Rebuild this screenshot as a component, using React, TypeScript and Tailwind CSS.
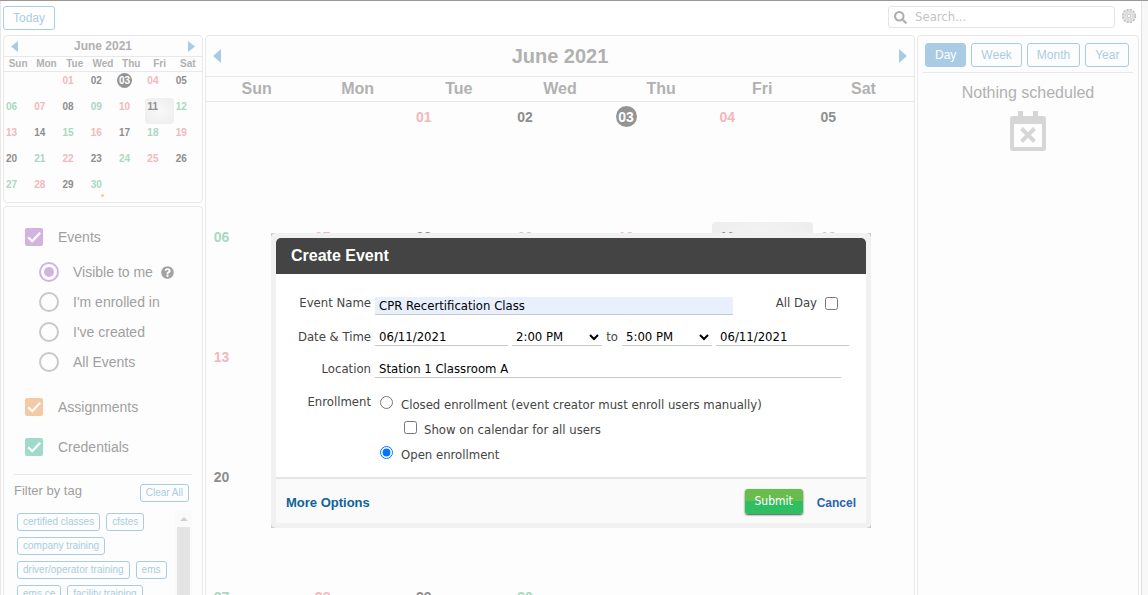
import { clsx } from 'clsx'
import { FaQuestionCircle, FaSearch } from 'react-icons/fa'

type Tone = 'red' | 'green' | 'black'

const weekdays = ['Sun', 'Mon', 'Tue', 'Wed', 'Thu', 'Fri', 'Sat']

// three shifts rotate through the month, one colour each
const rotation: Tone[] = ['red', 'black', 'green']

const toneClass = {
  red: 'text-[#f2b8bb]',
  green: 'text-[#a9d8c2]',
  black: 'text-[#8e8e8e]',
}

// the 4th and 5th repeat the 1st and 2nd, and so on
const toneOf = (day: number) => toneClass[rotation[(day - 1) % 3]]

const TODAY = 3
const SELECTED = 11
const FIRST_COLUMN = 2

const weeks = Array.from({ length: 5 }, (_, w) =>
  Array.from({ length: 7 }, (_, d) => {
    const day = w * 7 + d - FIRST_COLUMN + 1
    return day >= 1 && day <= 30 ? day : null
  })
)

const tags = [
  'certified classes',
  'cfstes',
  'company training',
  'driver/operator training',
  'ems',
  'ems ce',
  'facility training',
]

const times = ['1:00 PM', '2:00 PM', '3:00 PM', '4:00 PM', '5:00 PM']

const Arrow = ({ dir, small }: { dir: 'left' | 'right'; small?: boolean }) => (
  <svg
    viewBox="0 0 8 14"
    preserveAspectRatio="none"
    className={clsx('fill-[#a9cce4]', small ? 'h-[11px] w-[7px]' : 'h-[14px] w-2')}
  >
    <path d={dir === 'left' ? 'M8 0v14L0 7z' : 'M0 0v14l8-7z'} />
  </svg>
)

const Calendar = ({ small }: { small?: boolean }) => (
  <section className="rounded border border-[#e8e8e8] bg-[#fdfdfd] text-[#b1b1b1]">
    <div
      className={clsx(
        'flex items-center justify-between border-b border-[#e8e8e8] px-[7px]',
        small ? 'h-[21px]' : 'h-[41px]'
      )}
    >
      <button aria-label="Previous month">
        <Arrow dir="left" small={small} />
      </button>
      <h2 className={clsx('font-bold', small ? 'text-xs' : 'text-xl')}>June 2021</h2>
      <button aria-label="Next month">
        <Arrow dir="right" small={small} />
      </button>
    </div>
    <table className="w-full table-fixed border-separate border-spacing-0">
      <thead>
        <tr>
          {weekdays.map((name) => (
            <th
              key={name}
              className={clsx(
                'border-b border-[#e8e8e8] p-0 text-center font-bold',
                small ? 'h-[15px] text-[10px] leading-[14px]' : 'h-[25px] text-base leading-6'
              )}
            >
              {name}
            </th>
          ))}
        </tr>
      </thead>
      <tbody>
        {weeks.map((week, w) => (
          <tr key={w}>
            {week.map((day, d) => (
              <td
                key={d}
                className={clsx(
                  'p-0 align-top font-bold',
                  small ? 'h-[26px] text-[10px]' : 'h-[120px] text-sm',
                  day === SELECTED && 'rounded bg-radial from-[#f8f8f8] to-[#ededed]'
                )}
              >
                {day && (
                  <div className={small ? 'pt-px' : 'pt-1 pl-[5px]'}>
                    <span
                      className={clsx(
                        'flex items-center justify-center rounded-full',
                        small ? 'size-[15px]' : 'size-[21px]',
                        day === TODAY ? 'bg-[#949494] text-white' : toneOf(day)
                      )}
                    >
                      {String(day).padStart(2, '0')}
                    </span>
                    {day === 30 && <i className="mx-auto mt-0.5 block size-[3px] rounded-full bg-[#f4caa4]" />}
                  </div>
                )}
              </td>
            ))}
          </tr>
        ))}
      </tbody>
    </table>
  </section>
)

const CheckRow = ({ label, color }: { label: string; color: string }) => (
  <label className="flex h-10 items-center gap-[15px] pl-[21px] text-sm">
    <span className="grid place-items-center">
      <input
        type="checkbox"
        defaultChecked
        className={clsx('col-start-1 row-start-1 size-[18px] appearance-none rounded-xs', color)}
      />
      <svg viewBox="0 0 18 18" className="pointer-events-none col-start-1 row-start-1 size-[18px]">
        <path d="M3.2 9.2l4 4 8-8.4" fill="none" stroke="#fff" strokeWidth="2.2" />
      </svg>
    </span>
    {label}
  </label>
)

const RadioRow = ({ label, checked, help }: { label: string; checked?: boolean; help?: boolean }) => (
  <label className="flex h-[30px] items-center pl-[35px] text-sm">
    <input
      type="radio"
      name="visibility"
      defaultChecked={checked}
      className="mr-3.5 size-5 appearance-none rounded-full border-2 border-[#c8c8c8] p-[3px] checked:border-[#d2b3e0] checked:bg-[#d2b3e0] checked:bg-clip-content"
    />
    {label}
    {help && <FaQuestionCircle className="ml-2 size-[13px] text-[#a3a3a3]" />}
  </label>
)

const Filters = () => (
  <section className="flex min-h-0 flex-1 flex-col rounded-t border border-b-0 border-[#e8e8e8] bg-[#fdfdfd] text-[#a0a0a0]">
    <div className="pt-2.5">
      <CheckRow label="Events" color="bg-[#d2b3e0]" />
      <RadioRow label="Visible to me" checked help />
      <RadioRow label="I'm enrolled in" />
      <RadioRow label="I've created" />
      <RadioRow label="All Events" />
    </div>
    <div className="pt-2.5">
      <CheckRow label="Assignments" color="bg-[#f4caa4]" />
      <CheckRow label="Credentials" color="bg-[#a0dacb]" />
    </div>
    <div className="mx-2.5 mt-[7px] flex h-9 shrink-0 items-start justify-between border-t border-[#e8e8e8] pr-[3px]">
      <h3 className="pt-1.5 text-[13px]">Filter by tag</h3>
      <button className="mt-[9px] h-[18px] rounded-[3px] border border-[#a9cce4] px-[5px] text-[10px] leading-4 text-[#a9cce4]">
        Clear All
      </button>
    </div>
    <div className="mx-2.5 flex min-h-0 flex-1 overflow-hidden">
      <div className="flex flex-1 flex-wrap content-start gap-1.5 p-[3px] pr-0">
        {tags.map((tag) => (
          <button
            key={tag}
            className="h-[18px] rounded-[3px] border border-[#a9cce4] px-[5px] text-[10px] leading-4 text-[#a9cce4]"
          >
            {tag}
          </button>
        ))}
      </div>
      <div className="flex w-[17px] flex-col items-center bg-[#fafafa]">
        <svg viewBox="0 0 8 4" className="mt-[7px] mb-1.5 h-1 w-2 shrink-0 fill-[#d0d0d0]">
          <path d="M4 0l4 4H0z" />
        </svg>
        <div className="w-[13px] flex-1 bg-[#e4e4e4]" />
      </div>
    </div>
  </section>
)

const EmptyCalendar = () => (
  <svg viewBox="0 0 36 40" className="mx-auto mt-1.5 h-10 w-9">
    <path
      fill="#d6d6d6"
      fillRule="evenodd"
      d="M8 0h5v5h10V0h5v5h5a3 3 0 0 1 3 3v29a3 3 0 0 1-3 3H3a3 3 0 0 1-3-3V8a3 3 0 0 1 3-3h5zM4 13v23h28V13z"
    />
    <path d="M11.5 17.5l13 13M24.5 17.5l-13 13" stroke="#d6d6d6" strokeWidth="4" />
  </svg>
)

const Agenda = () => (
  <section className="w-[222px] rounded-t border border-b-0 border-[#e8e8e8] bg-[#fdfdfd] px-[5px] pt-[7px]">
    <div className="flex gap-[5px] border-b border-[#e8e8e8] px-0.5 pb-[5px]">
      {['Day', 'Week', 'Month', 'Year'].map((view) => (
        <button
          key={view}
          className={clsx(
            'h-6 rounded-[3px] border border-[#a9cce4] px-[9px] text-xs leading-[22px]',
            view === 'Day' ? 'bg-[#a9cce4] text-white' : 'text-[#a9cce4]'
          )}
        >
          {view}
        </button>
      ))}
    </div>
    <p className="pt-2 text-center text-base text-[#b1b1b1]">Nothing scheduled</p>
    <EmptyCalendar />
  </section>
)

const Gear = () => (
  <svg viewBox="0 0 16 16" className="size-4" fill="none">
    <circle cx="8" cy="8" r="4.6" stroke="#e2e2e2" strokeWidth="3.6" />
    <circle cx="8" cy="8" r="6.4" stroke="#c2c2c2" strokeWidth="1.6" strokeDasharray="2.2 1.15" />
    <circle cx="8" cy="8" r="3.6" stroke="#cfcfcf" strokeDasharray="1.6 1.2" />
    <circle cx="8" cy="8" r="1.9" stroke="#bdbdbd" />
  </svg>
)

const underline = 'h-[18px] border-b border-[#c8c8c8] text-[13px] leading-[17px] text-black outline-none'
const field = 'ml-1 px-1'
const label = 'w-[95px] shrink-0 text-right'

const CreateEvent = () => (
  <form
    role="dialog"
    aria-label="Create Event"
    className="w-[600px] bg-[#cfcfcf] font-['DejaVu_Sans_Condensed','DejaVu_Sans',sans-serif] text-[13px] leading-[18px] text-[#444]"
  >
    <div className="rounded-[5px] bg-[#f1f1f1] p-[5px]">
      <h1 className="h-9 rounded-t-[5px] bg-[#444] px-[15px] font-['Liberation_Sans',Arial,sans-serif] text-base leading-[35px] font-bold text-white">
        Create Event
      </h1>
      <div className="flex flex-col gap-[13px] bg-white pt-5 pb-[13px]">
        <div className="flex h-[21px] items-start">
          <label htmlFor="name" className={label}>
            Event Name
          </label>
          <input
            id="name"
            defaultValue="CPR Recertification Class"
            className={clsx(underline, field, 'w-[358px] self-end bg-[#e8f0fe]')}
          />
          <label className="ml-auto flex items-center gap-2 pr-7">
            All Day
            <input type="checkbox" className="size-[13px]" />
          </label>
        </div>
        <div className="flex items-center">
          <label htmlFor="start" className={label}>
            Date &amp; Time
          </label>
          <input id="start" defaultValue="06/11/2021" className={clsx(underline, field, 'w-[133px]')} />
          <select aria-label="Start time" defaultValue="2:00 PM" className={clsx(underline, 'ml-1 w-[90px]')}>
            {times.map((t) => (
              <option key={t}>{t}</option>
            ))}
          </select>
          <span className="w-5 text-center">to</span>
          <select aria-label="End time" defaultValue="5:00 PM" className={clsx(underline, 'w-[90px]')}>
            {times.map((t) => (
              <option key={t}>{t}</option>
            ))}
          </select>
          <input aria-label="End date" defaultValue="06/11/2021" className={clsx(underline, field, 'w-[133px]')} />
        </div>
        <div className="flex items-center pt-px">
          <label htmlFor="location" className={label}>
            Location
          </label>
          <input
            id="location"
            defaultValue="Station 1 Classroom A"
            className={clsx(underline, field, 'mr-[25px] flex-1')}
          />
        </div>
        <div role="radiogroup" aria-labelledby="enrollment" className="flex items-start pt-0.5">
          <span id="enrollment" className={label}>
            Enrollment
          </span>
          <div className="flex flex-col gap-[7px] pt-[3px] pl-[9px]">
            <label className="flex items-start gap-2">
              <input type="radio" name="enroll" className="size-[13px]" />
              Closed enrollment (event creator must enroll users manually)
            </label>
            <label className="flex items-start gap-[7px] pl-6">
              <input type="checkbox" className="size-[13px]" />
              Show on calendar for all users
            </label>
            <label className="flex items-start gap-2">
              <input type="radio" name="enroll" defaultChecked className="size-[13px]" />
              Open enrollment
            </label>
          </div>
        </div>
      </div>
      <div className="flex h-[46px] items-center border-t-2 border-[#e4e4e4] bg-[#fafafa] px-2.5 font-['Liberation_Sans',Arial,sans-serif]">
        <a href="#" className="pt-1 text-[13px] font-bold text-[#0d6499]">
          More Options
        </a>
        <button
          type="button"
          className="mr-3.5 ml-auto h-[25px] w-[58px] rounded-[3px] bg-linear-to-b from-[#69bd4c] from-50% to-[#2fbe61] to-50% font-['DejaVu_Sans_Condensed','DejaVu_Sans',sans-serif] text-xs text-white shadow-[0_1px_2px_rgba(0,0,0,0.7)]"
        >
          Submit
        </button>
        <a href="#" className="pt-1 text-xs leading-[18px] font-bold text-[#2b63ae]">
          Cancel
        </a>
      </div>
    </div>
  </form>
)

export default function App() {
  return (
    <div className="relative flex h-screen overflow-hidden border-t border-[#999] bg-white font-['Liberation_Sans',Arial,sans-serif]">
      <div className="flex min-w-0 flex-1 flex-col border-l border-[#e8e8e8] px-0.5">
        <header className="flex h-[34px] shrink-0 items-start pt-[5px]">
          <button className="h-6 rounded-[3px] border border-[#a9cce4] px-[9px] text-xs leading-[22px] text-[#a9cce4]">
            Today
          </button>
          <label className="ml-auto flex h-[22px] w-[227px] items-center gap-2 rounded-[3px] border border-[#e4e4e4] px-[5px]">
            <FaSearch className="size-[13px] shrink-0 text-[#b0b0b0]" />
            <input
              type="search"
              aria-label="Search"
              placeholder="Search..."
              className="w-full font-['DejaVu_Sans_Condensed','DejaVu_Sans',sans-serif] text-[13px] outline-none placeholder:text-[#c4c4c4]"
            />
          </label>
          <button aria-label="Settings" className="mt-0.5 mr-0.5 ml-1.5">
            <Gear />
          </button>
        </header>
        <main className="flex min-h-0 flex-1 gap-0.5">
          <aside className="flex w-[200px] flex-col gap-[3px]">
            <Calendar small />
            <Filters />
          </aside>
          <div className="min-w-0 flex-1">
            <Calendar />
          </div>
          <Agenda />
        </main>
      </div>
      <div className="w-[7px] border-l border-[#e0e0e0] bg-[#f8f8f8]" />

      {/* Dialog */}
      <div className="absolute inset-0 flex items-start justify-center pt-[232px] pr-[6px]">
        <CreateEvent />
      </div>
    </div>
  )
}
